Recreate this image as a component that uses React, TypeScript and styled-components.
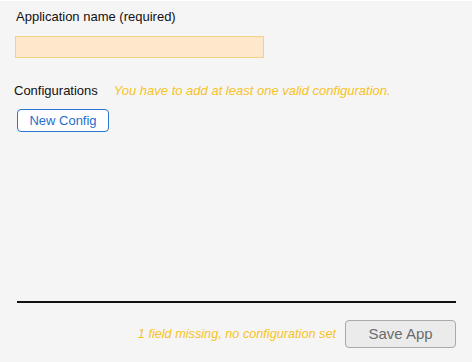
import React from "react";
import styled, { createGlobalStyle } from "styled-components";

const GlobalStyle = createGlobalStyle`
    html, body {
        margin: 0;
        padding: 0;
        background: #ffffff;
    }
    body {
        font-family: "Liberation Sans", Arial, sans-serif;
    }
`;

export default function App() {
    return (
        <>
            <GlobalStyle />
            <StyledEditor>
                <Content>
                    <Label>Application name (required)</Label>
                    <NameInput type="text" />

                    <ConfigHeader>
                        <SectionTitle>Configurations</SectionTitle>
                        <Warning>You have to add at least one valid configuration.</Warning>
                    </ConfigHeader>

                    <NewConfigButton>New Config</NewConfigButton>
                </Content>

                <Footer>
                    <Warning size={12.7}>1 field missing, no configuration set</Warning>
                    <SaveButton disabled>Save App</SaveButton>
                </Footer>
            </StyledEditor>
        </>
    );
}

const StyledEditor = styled.div`
    box-sizing: border-box;
    width: 472px;
    height: 361px;
    margin-top: 1px;
    background-color: #f6f5f5;
    display: flex;
    flex-direction: column;
    padding: 0 16px 0 17px;
`;

const Content = styled.div`
    flex: 1;
    display: flex;
    flex-direction: column;
    align-items: flex-start;
    border-bottom: 2px solid #111;
`;

const Label = styled.label`
    font-size: 13px;
    color: #111;
    margin: 8px 0 0 -1px;
    line-height: 16px;
`;

const NameInput = styled.input`
    box-sizing: border-box;
    width: 249px;
    height: 22px;
    margin: 11px 0 0 -2px;
    background-color: #fde8cb;
    border: 1px solid #f5d184;
    outline: none;
`;

const ConfigHeader = styled.div`
    display: flex;
    align-items: baseline;
    gap: 16px;
    margin: 25px 0 0 -3px;
`;

const SectionTitle = styled.span`
    font-size: 13px;
    color: #111;
`;

const Warning = styled.span<{ size?: number }>`
    font-size: ${(p) => p.size ?? 13}px;
    font-style: italic;
    color: #f5c324;
`;

const NewConfigButton = styled.button`
    box-sizing: border-box;
    width: 92px;
    height: 23px;
    margin-top: 11px;
    background: #ffffff;
    border: 1px solid #2a76d2;
    border-radius: 4px;
    color: #1f6ed0;
    font-family: inherit;
    font-size: 13px;
    padding: 0;
`;

const Footer = styled.div`
    display: flex;
    justify-content: flex-end;
    align-items: center;
    gap: 9px;
    height: 59px;
    padding-top: 2px;
    box-sizing: border-box;
`;

const SaveButton = styled.button`
    box-sizing: border-box;
    width: 111px;
    height: 28px;
    background: #ebebeb;
    border: 1px solid #a9a9a9;
    border-radius: 4px;
    color: #6b6b6b;
    font-family: inherit;
    font-size: 15px;
    padding: 0;
`;
